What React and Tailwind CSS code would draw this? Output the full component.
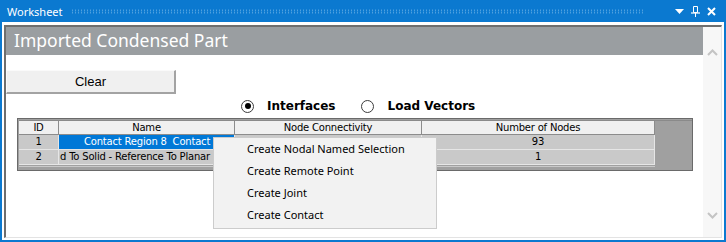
const cols = [
  { key: 'id', label: 'ID', w: 'w-[40px]' },
  { key: 'name', label: 'Name', w: 'w-[176px]' },
  { key: 'conn', label: 'Node Connectivity', w: 'w-[187px]' },
  { key: 'nodes', label: 'Number of Nodes', w: 'w-[233px]' },
]

const rows = [
  { id: '1', name: 'Contact Region 8  Contact Region 8', conn: 'Not Connected', nodes: '93', selected: true },
  { id: '2', name: 'd To Solid - Reference To Planar', conn: '', nodes: '1' },
]

const menu = ['Create Nodal Named Selection', 'Create Remote Point', 'Create Joint', 'Create Contact']

function Radio({ on }) {
  return (
    <span className="w-[13px] h-[13px] rounded-full border border-[#3c3c3c] bg-white flex items-center justify-center">
      {on && <span className="w-[6px] h-[6px] rounded-full bg-black" />}
    </span>
  )
}

export default function App() {
  return (
    <div className="relative w-[726px] h-[242px] flex flex-col border-x-2 border-b-2 border-[#0b79d0] bg-white font-['Noto_Sans',sans-serif]">
      {/* title bar */}
      <div className="h-[22px] bg-[#0b79d0] flex items-center pl-[5px] pr-[8px] shrink-0">
        <span className="text-white text-[11px] leading-none">Worksheet</span>
        <div className="flex-1 ml-[8px] mr-[30px] h-[5px] bg-[radial-gradient(circle,#5fa9e2_0.7px,transparent_0.9px)] bg-[length:3px_2.5px]" />
        <svg width="9" height="5" viewBox="0 0 9 5" className="mr-[7px]"><path d="M0 0h9L4.5 5z" fill="#fff" /></svg>
        <svg width="9" height="11" viewBox="0 0 9 11" className="mr-[7px]">
          <path d="M2.5 0.5h4v6h-4z" fill="none" stroke="#fff" />
          <path d="M0 7h9" stroke="#fff" strokeWidth="1.2" />
          <path d="M4.5 7v4" stroke="#fff" />
        </svg>
        <svg width="9" height="9" viewBox="0 0 9 9"><path d="M1 1l7 7M8 1L1 8" stroke="#fff" strokeWidth="2" /></svg>
      </div>

      {/* body */}
      <div className="flex-1 flex px-[2px] pt-[3px] pb-[2px]">
        <div className="flex-1 flex border-l-2 border-t-2 border-[#6e6e6e] border-r border-b border-r-[#e3e3e3] border-b-[#e3e3e3]">
          <div className="flex-1 flex flex-col">
            <div className="h-[28px] bg-[#9a9ea1] flex items-center pl-[8px]">
              <span className="text-white text-[17.5px] leading-none">Imported Condensed Part</span>
            </div>

            <button className="mt-[15px] w-[170px] h-[24px] bg-[#f0f0f0] border-t border-l border-[#fafafa] border-r-2 border-b-2 border-r-[#a3a3a3] border-b-[#a3a3a3] font-['Liberation_Sans',sans-serif] text-[13px] text-black">
              Clear
            </button>

            <div className="flex items-center h-[18px] mt-[3px] ml-[235px] font-['DejaVu_Sans',sans-serif] font-bold text-[12px] text-black">
              <Radio on />
              <span className="ml-[13px]">Interfaces</span>
              <span className="ml-[25px]"><Radio /></span>
              <span className="ml-[14px]">Load Vectors</span>
            </div>

            {/* table */}
            <div className="mt-[3px] ml-[11px] w-[676px] h-[53px] border border-[#6a6a6a] bg-[#a0a0a0] pl-[1px] pt-[1px] flex flex-col font-['DejaVu_Sans',sans-serif] text-[10px] tracking-[-0.2px] text-black">
              <div className="flex border-t border-[#8a8a8a]">
                {cols.map(c => (
                  <div key={c.key} className={`${c.w} h-[14px] bg-[#f0f0f0] border-r border-b border-[#8c8c8c] flex items-center justify-center leading-none`}>
                    {c.label}
                  </div>
                ))}
              </div>
              {rows.map(r => (
                <div key={r.id} className="flex">
                  {cols.map(c => {
                    const sel = r.selected && c.key === 'name'
                    return (
                      <div
                        key={c.key}
                        className={`${c.w} h-[15px] border-r border-b border-[#e6e6e6] flex items-center overflow-hidden whitespace-pre leading-none ${sel ? 'bg-[#0078d7] text-white' : 'bg-[#c9c9c9]'} ${c.key === 'name' ? (r.selected ? 'pl-[25px]' : 'pl-[1px]') : 'justify-center'}`}
                      >
                        {r[c.key]}
                      </div>
                    )
                  })}
                </div>
              ))}
              <div className="mt-[1px] h-[4px] w-[636px] border-t border-[#c9c9c9]" />
            </div>
          </div>

          {/* scrollbar */}
          <div className="w-[18px] bg-[#f7f7f7] flex flex-col items-center justify-between pt-[22px] pb-[18px]">
            <svg width="11" height="7" viewBox="0 0 11 7"><path d="M1 6l4.5-4.5L10 6" fill="none" stroke="#c4c4c4" strokeWidth="2" /></svg>
            <svg width="11" height="7" viewBox="0 0 11 7"><path d="M1 1l4.5 4.5L10 1" fill="none" stroke="#c4c4c4" strokeWidth="2" /></svg>
          </div>
        </div>
      </div>

      {/* context menu */}
      <div className="absolute left-[211px] top-[137px] w-[224px] py-[1px] bg-[#f2f2f2] border border-[#cccccc] text-[11px] text-black">
        {menu.map(m => (
          <div key={m} className="h-[22px] flex items-center pl-[33px] pb-[3px] leading-none">{m}</div>
        ))}
      </div>
    </div>
  )
}
